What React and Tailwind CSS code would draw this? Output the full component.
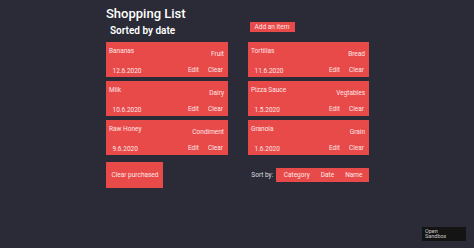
import React from "react";

const left = [
  { name: "Bananas", cat: "Fruit", date: "12.6.2020" },
  { name: "Milk", cat: "Dairy", date: "10.6.2020" },
  { name: "Raw Honey", cat: "Condiment", date: "9.6.2020" },
];
const right = [
  { name: "Tortillas", cat: "Bread", date: "11.6.2020" },
  { name: "Pizza Sauce", cat: "Vegtables", date: "1.5.2020" },
  { name: "Granola", cat: "Grain", date: "1.6.2020" },
];

function Card({ item }) {
  return (
    <div className="h-[35px] mb-[4px] bg-[#e84a4a] text-[#fde6e6] text-[6.5px] leading-[8px] flex flex-col pt-[5px]">
      <div className="flex justify-between items-start pl-[3.5px] pr-[3.5px]">
        <span>{item.name}</span>
        <span className="mt-[2.5px]">{item.cat}</span>
      </div>
      <div className="flex items-center mt-[8px] pl-[7px] pr-[4.5px]">
        <span className="flex-1 mt-[1px]">{item.date}</span>
        <span>Edit</span>
        <span className="ml-[9px]">Clear</span>
      </div>
    </div>
  );
}

export default function App() {
  return (
    <div className="relative h-[248px] w-full bg-[#2a2b36] font-['Roboto','Liberation_Sans',sans-serif] overflow-hidden">
      <div className="w-[263px] mx-auto pt-[5.7px]">
        <h1 className="text-[13px] leading-[16px] font-medium text-white pl-[0.5px]">Shopping List</h1>
        <div className="grid grid-cols-[122px_121px] gap-x-[20px] items-start">
          <div className="pl-[4.5px] mt-[3px] text-[10px] leading-[12px] font-semibold text-white">Sorted by date</div>
          <div className="flex pl-[2px] mt-[0.3px]">
            <button className="block h-[10px] w-[45px] bg-[#e84a4a] text-[#fde6e6] text-[6.5px] leading-[10px] text-center">Add an item</button>
          </div>
        </div>
        <div className="grid grid-cols-[122px_121px] gap-x-[20px] mt-[5.4px]">
          <div>
            {left.map((it) => (
              <Card key={it.name} item={it} />
            ))}
          </div>
          <div>
            {right.map((it) => (
              <Card key={it.name} item={it} />
            ))}
          </div>
        </div>
        <div className="flex items-center justify-between mt-[3px]">
          <button className="block h-[26px] w-[57px] bg-[#e84a4a] text-[#fde6e6] text-[6.5px] leading-[8px] text-left pl-[6px]">Clear purchased</button>
          <div className="flex items-center">
            <span className="text-[6.5px] leading-[8px] text-[#dcdce0] mr-[3px]">Sort by:</span>
            <div className="flex items-center h-[14px] bg-[#e84a4a] text-[#fde6e6] text-[6.5px] leading-[8px] pl-[2px] pr-[0.5px]">
              <span className="px-[5.5px]">Category</span>
              <span className="px-[5.5px]">Date</span>
              <span className="px-[5.5px]">Name</span>
            </div>
          </div>
        </div>
      </div>
      <div className="absolute right-[8px] bottom-[7px] w-[44px] h-[14px] bg-[#141414] text-[#c8c8c8] text-[5.5px] leading-[5.5px] pl-[3px] pt-[1.5px]">
        <div>Open</div>
        <div>Sandbox</div>
      </div>
    </div>
  );
}
